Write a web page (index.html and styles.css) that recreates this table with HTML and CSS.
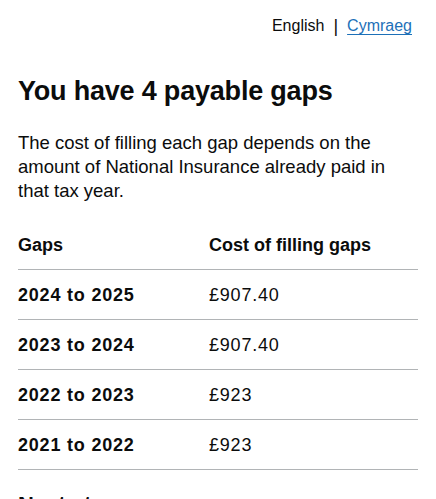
FILE: index.html
```html
<!DOCTYPE html>
<html lang="en">
<head>
<meta charset="utf-8">
<title>You have 4 payable gaps</title>
<link rel="stylesheet" href="styles.css">
</head>
<body>
<main class="page">
  <nav class="lang-toggle">
    <span class="lang-current">English</span>
    <span class="lang-sep">|</span>
    <a class="lang-link" href="#">Cymraeg</a>
  </nav>
  <h1 class="heading">You have 4 payable gaps</h1>
  <p class="body-text">The cost of filling each gap depends on the amount of National Insurance already paid in that tax year.</p>
  <table class="gaps-table">
    <thead>
      <tr><th class="col-year">Gaps</th><th class="col-cost">Cost of filling gaps</th></tr>
    </thead>
    <tbody>
      <tr><th class="col-year num">2024 to 2025</th><td class="col-cost num">£907.40</td></tr>
      <tr><th class="col-year num">2023 to 2024</th><td class="col-cost num">£907.40</td></tr>
      <tr><th class="col-year num">2022 to 2023</th><td class="col-cost num">£923</td></tr>
      <tr><th class="col-year num">2021 to 2022</th><td class="col-cost num">£923</td></tr>
    </tbody>
  </table>
  <h2 class="subheading">Next steps</h2>
</main>
</body>
</html>
```
FILE: styles.css
```css
html, body {
  margin: 0;
  padding: 0;
  background: #ffffff;
}
body {
  font-family: "Liberation Sans", Arial, sans-serif;
  color: #0b0c0c;
}
.page {
  padding: 0 18px;
}
.lang-toggle {
  display: flex;
  justify-content: flex-end;
  align-items: center;
  gap: 9px;
  padding: 15px 6px 0 0;
  font-size: 16px;
  line-height: 22px;
}
.lang-sep {
  font-size: 18px;
}
.lang-link {
  color: #1d70b8;
  text-decoration: underline;
  text-underline-offset: 3px;
}
.heading {
  margin: 37px 0 0;
  font-size: 27px;
  line-height: 34px;
  font-weight: 700;
  letter-spacing: -0.2px;
}
.body-text {
  margin: 23px 0 0;
  font-size: 18.5px;
  line-height: 24px;
}
.gaps-table {
  width: 100%;
  margin-top: 17px;
  border-collapse: collapse;
  font-size: 18px;
  line-height: 24px;
}
.gaps-table th,
.gaps-table td {
  text-align: left;
  padding: 13px 0 12px;
  border-bottom: 1px solid #b1b4b6;
}
.gaps-table th {
  font-weight: 700;
}
.gaps-table td {
  font-weight: 400;
}
.gaps-table .num {
  letter-spacing: 0.8px;
}
.col-year {
  width: 191px;
}
.subheading {
  margin: 21px 0 0;
  font-size: 22px;
  line-height: 28px;
  font-weight: 700;
}
```
